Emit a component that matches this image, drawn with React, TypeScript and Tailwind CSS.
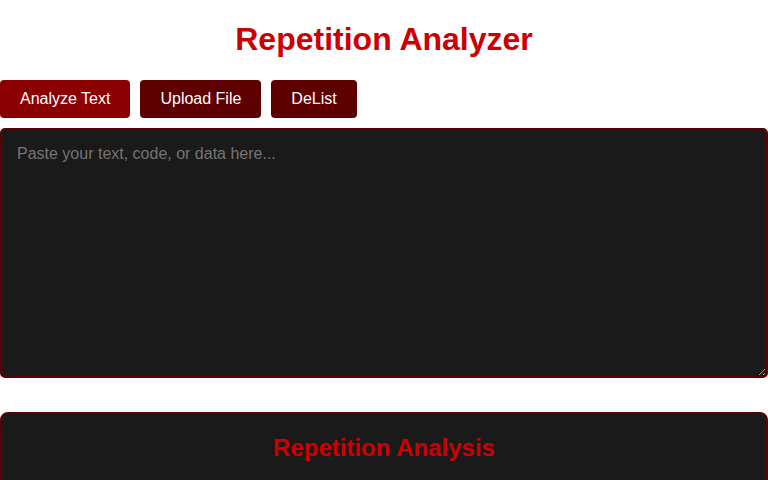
import { useState } from "react"

export default function App() {
  const [text, setText] = useState("")

  return (
    <div className="min-h-screen bg-white font-['Liberation_Sans',Arial,sans-serif]">
      <h1 className="pt-[21px] pb-[22px] text-center text-[32px] leading-[37px] font-bold text-[#cc0000]">
        Repetition Analyzer
      </h1>

      <div className="flex gap-[10px]">
        <button className="h-[38px] rounded-[4px] bg-[#8b0000] px-[20px] text-base text-white">
          Analyze Text
        </button>
        <button className="h-[38px] rounded-[4px] bg-[#5e0000] px-[20px] text-base text-white">
          Upload File
        </button>
        <button className="h-[38px] rounded-[4px] bg-[#5e0000] px-[20px] text-base text-white">
          DeList
        </button>
      </div>

      <textarea
        value={text}
        onChange={(e) => setText(e.target.value)}
        placeholder="Paste your text, code, or data here..."
        className="mt-[10px] block h-[250px] w-full rounded-[5px] border-2 border-[#5e0000] bg-[#1a1a1a] p-[15px] text-base leading-[18px] text-white placeholder:text-[#757575] outline-none"
      />

      <section className="mt-[34px] rounded-[8px] border-2 border-[#5e0000] bg-[#1a1a1a] px-[20px] pt-[20px] pb-[40px]">
        <h2 className="text-center text-[24px] leading-[28px] font-bold text-[#cc0000]">
          Repetition Analysis
        </h2>
      </section>
    </div>
  )
}
